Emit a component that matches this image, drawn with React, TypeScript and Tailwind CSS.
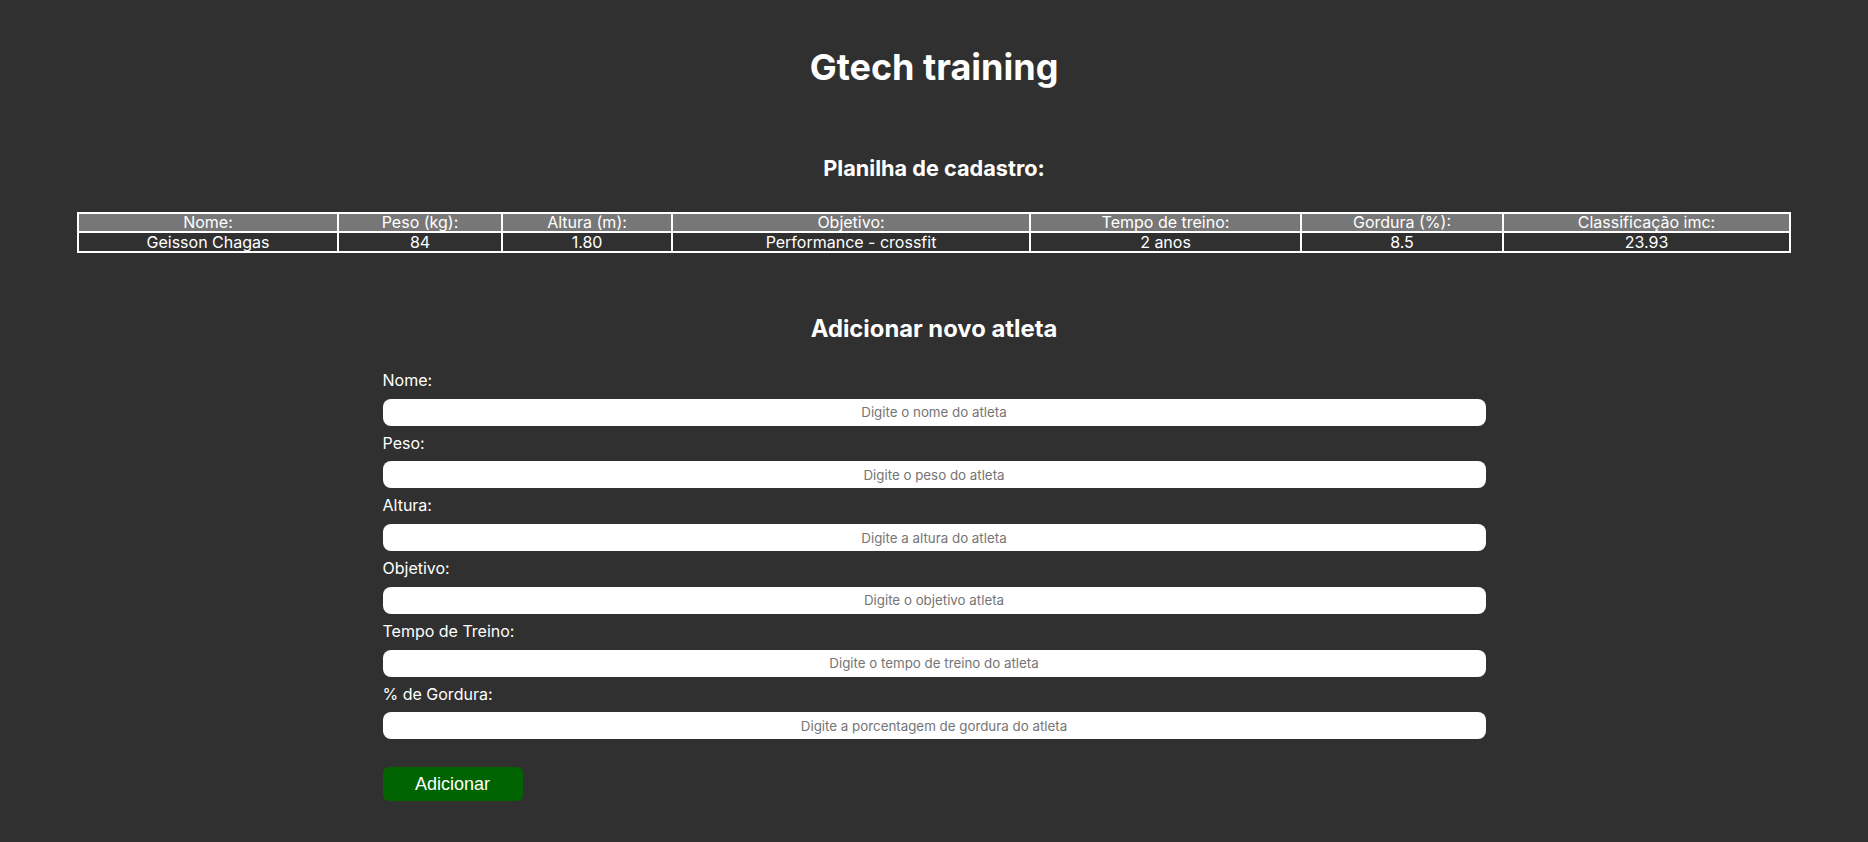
import React from "react";

type Athlete = {
  nome: string;
  peso: string;
  altura: string;
  objetivo: string;
  tempo: string;
  gordura: string;
  imc: string;
};

const columns = [
  { label: "Nome:", width: "w-[260px]" },
  { label: "Peso (kg):", width: "w-[164px]" },
  { label: "Altura (m):", width: "w-[170px]" },
  { label: "Objetivo:", width: "w-[358px]" },
  { label: "Tempo de treino:", width: "w-[271px]" },
  { label: "Gordura (%):", width: "w-[202px]" },
  { label: "Classificação imc:", width: "w-[287px]" },
];

const athletes: Athlete[] = [
  {
    nome: "Geisson Chagas",
    peso: "84",
    altura: "1.80",
    objetivo: "Performance - crossfit",
    tempo: "2 anos",
    gordura: "8.5",
    imc: "23.93",
  },
];

const fields = [
  { label: "Nome:", placeholder: "Digite o nome do atleta" },
  { label: "Peso:", placeholder: "Digite o peso do atleta" },
  { label: "Altura:", placeholder: "Digite a altura do atleta" },
  { label: "Objetivo:", placeholder: "Digite o objetivo atleta" },
  { label: "Tempo de Treino:", placeholder: "Digite o tempo de treino do atleta" },
  { label: "% de Gordura:", placeholder: "Digite a porcentagem de gordura do atleta" },
];

export default function App() {
  return (
    <div className="min-h-screen bg-[#303030] text-white font-['Inter','Noto_Sans',sans-serif] flex flex-col items-center">
      <h1 className="mt-[45px] text-[36px] leading-[44px] font-bold">Gtech training</h1>

      <h2 className="mt-[66px] text-[21.7px] leading-[27px] font-bold">Planilha de cadastro:</h2>

      {/* Tabela */}
      <table className="mt-[30px] w-[1714px] table-fixed border-separate border-spacing-0 border-t-2 border-l-2 border-white text-[16px]">
        <colgroup>
          {columns.map((c) => (
            <col key={c.label} className={c.width} />
          ))}
        </colgroup>
        <thead>
          <tr className="bg-[#777777]">
            {columns.map((c) => (
              <th key={c.label} className="p-0 font-normal leading-[17px] border-r-2 border-b-2 border-white text-center">
                {c.label}
              </th>
            ))}
          </tr>
        </thead>
        <tbody>
          {athletes.map((a) => (
            <tr key={a.nome}>
              {[a.nome, a.peso, a.altura, a.objetivo, a.tempo, a.gordura, a.imc].map((v, i) => (
                <td key={i} className="p-0 leading-[18px] border-r-2 border-b-2 border-white text-center">
                  {v}
                </td>
              ))}
            </tr>
          ))}
        </tbody>
      </table>

      <h2 className="mt-[61px] text-[23.8px] leading-[29px] font-bold">Adicionar novo atleta</h2>

      {/* Formulário */}
      <form className="mt-[28px] w-[1103px] flex flex-col" onSubmit={(e) => e.preventDefault()}>
        {fields.map((f) => (
          <label key={f.label} className="flex flex-col">
            <span className="text-[16px] leading-[19.7px]">{f.label}</span>
            <input
              type="text"
              placeholder={f.placeholder}
              className="my-2 h-[27px] w-full rounded-lg bg-white text-center text-[13.33px] text-black placeholder:text-[#757575] outline-none"
            />
          </label>
        ))}
        <button
          type="submit"
          className="mt-[20px] h-[34px] w-[140px] rounded-md bg-[#006400] text-white text-[18px] font-['Liberation_Sans',Arial,sans-serif]"
        >
          Adicionar
        </button>
      </form>
    </div>
  );
}
